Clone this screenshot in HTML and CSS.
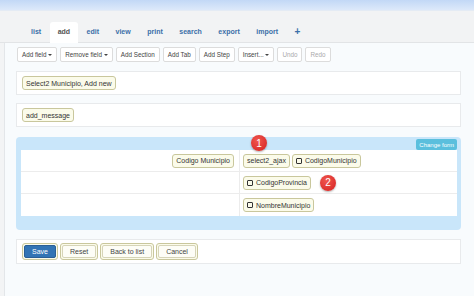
FILE: index.html
```html
<!DOCTYPE html>
<html>
<head>
    <link rel="stylesheet" href="styles.css">
</head>
<body>
    <div class="topbar"></div>
    <div class="tabs">
        <a class="tab">list</a>
        <a class="tab active">add</a>
        <a class="tab">edit</a>
        <a class="tab">view</a>
        <a class="tab">print</a>
        <a class="tab">search</a>
        <a class="tab">export</a>
        <a class="tab">import</a>
        <a class="tab plus">+</a>
    </div>
    <div class="content">
        <div class="toolbar">
            <button class="tool">Add field <span class="caret"></span></button>
            <button class="tool">Remove field <span class="caret"></span></button>
            <button class="tool">Add Section</button>
            <button class="tool">Add Tab</button>
            <button class="tool">Add Step</button>
            <button class="tool">Insert... <span class="caret"></span></button>
            <button class="tool disabled">Undo</button>
            <button class="tool disabled">Redo</button>
        </div>

        <div class="box">
            <span class="chip">Select2 Municipio, Add new</span>
        </div>
        <div class="box">
            <span class="chip">add_message</span>
        </div>

        <div class="form-panel">
            <div class="panel-head">
                <button class="change-form">Change form</button>
                <span class="badge badge-one">1</span>
            </div>
            <div class="grid">
                <div class="cell label-cell"><span class="chip">Codigo Municipio</span></div>
                <div class="cell">
                    <span class="chip">select2_ajax</span>
                    <span class="chip"><i class="check"></i>CodigoMunicipio</span>
                </div>
                <div class="cell label-cell"></div>
                <div class="cell">
                    <span class="chip"><i class="check"></i>CodigoProvincia</span>
                    <span class="badge badge-two">2</span>
                </div>
                <div class="cell label-cell"></div>
                <div class="cell">
                    <span class="chip"><i class="check"></i>NombreMunicipio</span>
                </div>
            </div>
        </div>

        <div class="box actions">
            <span class="chip btn-wrap"><button class="btn primary">Save</button></span>
            <span class="chip btn-wrap"><button class="btn">Reset</button></span>
            <span class="chip btn-wrap"><button class="btn">Back to list</button></span>
            <span class="chip btn-wrap"><button class="btn">Cancel</button></span>
        </div>
    </div>
</body>
</html>
```

FILE: styles.css
```css
body {
    margin: 0;
    background-color: #f3f4f5;
    font-family: 'Liberation Sans', Arial, sans-serif;
    font-size: 7px;
    color: #333;
    overflow: hidden;
}

.topbar {
    height: 10px;
    background: linear-gradient(to bottom, #c2d8f6, #dde9fa);
    border-bottom: 1px solid #e4ebf4;
}

.tabs {
    display: flex;
    align-items: flex-end;
    gap: 0.5px;
    height: 31px;
    padding-left: 23px;
    border-bottom: 1px solid #e2e4e6;
    background-color: #f2f3f4;
}

.tab {
    display: block;
    height: 20px;
    line-height: 19px;
    padding: 0 8px;
    font-size: 7px;
    font-weight: bold;
    color: #3b6fa8;
    border-radius: 3px 3px 0 0;
}

.tab.active {
    background-color: #fff;
    color: #555;
    margin-bottom: -1px;
    height: 21px;
}

.tab.plus {
    font-size: 10px;
}

.content {
    margin-left: 4px;
    border-left: 1px solid #e3e6e9;
    background-color: #f8fbfd;
    padding: 4px 13px 30px 11px;
}

.toolbar {
    display: flex;
    gap: 3px;
    margin-bottom: 9px;
    padding-left: 1px;
}

.tool {
    height: 15px;
    padding: 0 4px;
    border: 1px solid #dcdcdc;
    border-radius: 2px;
    background-color: #fff;
    font-family: inherit;
    font-size: 6.3px;
    color: #444;
}

.tool.disabled {
    color: #aaa;
}

.caret {
    display: inline-block;
    width: 0;
    height: 0;
    vertical-align: 1px;
    border-left: 2px solid transparent;
    border-right: 2px solid transparent;
    border-top: 2px solid #444;
}

.box {
    display: flex;
    align-items: center;
    gap: 3px;
    height: 22px;
    padding: 0 5px;
    margin-bottom: 8px;
    background-color: #fff;
    border: 1px solid #e8eaec;
}

.chip {
    display: inline-flex;
    align-items: center;
    gap: 3px;
    height: 14px;
    padding: 0 3px;
    background-color: #fbfbea;
    border: 1px solid #c9c79c;
    border-radius: 3px;
    font-size: 7px;
    color: #333;
    box-sizing: border-box;
}

.check {
    display: inline-block;
    width: 4px;
    height: 4px;
    border: 1.5px solid #333;
    border-radius: 1px;
}

.form-panel {
    position: relative;
    margin-top: 10px;
    padding: 0 4px 14px 5px;
    background-color: #c9e6fa;
    border-radius: 4px;
}

.panel-head {
    display: flex;
    justify-content: flex-end;
    height: 13px;
    padding-top: 2px;
    box-sizing: border-box;
}

.change-form {
    height: 11px;
    padding: 0 3px;
    border: none;
    border-radius: 2px;
    background-color: #5bbfdd;
    color: #fff;
    font-family: inherit;
    font-size: 6px;
}

.grid {
    display: grid;
    grid-template-columns: 219px 1fr;
    background-color: #fff;
}

.cell {
    display: flex;
    align-items: center;
    gap: 2px;
    height: 22px;
    padding: 0 3px;
    border-bottom: 1px solid #ececec;
    box-sizing: border-box;
}

.cell:nth-last-child(-n+2) {
    border-bottom: none;
}

.label-cell {
    justify-content: flex-end;
    padding-right: 5px;
    border-right: 1px solid #ececec;
}

.badge {
    display: flex;
    align-items: center;
    justify-content: center;
    width: 16px;
    height: 16px;
    border-radius: 50%;
    background: radial-gradient(circle at 40% 35%, #f0564f, #d4201f);
    color: #fff;
    font-size: 10px;
    box-shadow: 0 1px 2px rgba(0, 0, 0, 0.3);
}

.badge-one {
    position: absolute;
    left: 235px;
    top: -2px;
}

.badge-two {
    margin-left: 7px;
}

.actions {
    height: 23px;
    padding: 0 5px;
    margin-top: 9px;
    gap: 2px;
}

.btn-wrap {
    height: 17px;
    padding: 1px;
}

.btn {
    height: 13px;
    padding: 0 7px;
    border: 1px solid #d6d4b8;
    border-radius: 2px;
    background-color: #fdfdf6;
    font-family: inherit;
    font-size: 7px;
    color: #444;
}

.btn.primary {
    background-color: #3274b5;
    border-color: #2a5f96;
    color: #fff;
}
```
